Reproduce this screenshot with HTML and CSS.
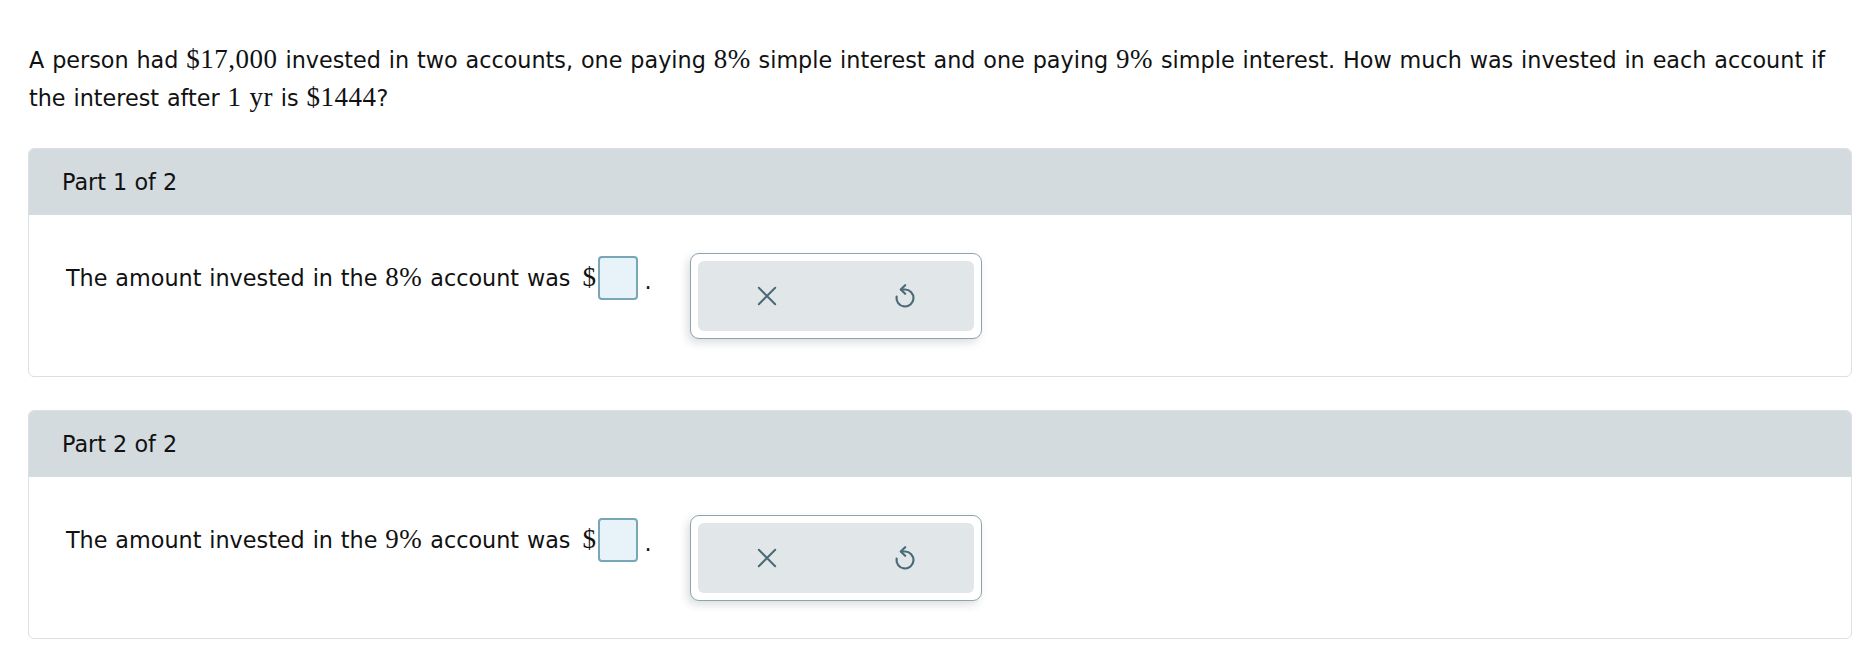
FILE: index.html
```html
<!DOCTYPE html>
<html lang="en">
<head>
<meta charset="utf-8">
<title>Simple interest</title>
<link rel="stylesheet" href="styles.css">
</head>
<body>
<main class="page">
  <p class="question">A person had <span class="m">$17,000</span> invested in two accounts, one paying <span class="m">8%</span> simple interest and one paying <span class="m">9%</span> simple interest. How much was invested in each account if<br>the interest after <span class="m">1</span> <span class="m">yr</span> is <span class="m">$1444</span>?</p>

  <section class="part">
    <div class="part-head">Part 1 of 2</div>
    <div class="part-body">
      <div class="answer-line">
        <span class="txt">The amount invested in the <span class="m">8%</span> account was</span>
        <span class="m dollar">$</span><span class="input"></span><span class="period">.</span>
      </div>
      <div class="tools">
        <div class="tools-inner">
          <button class="tool" type="button" aria-label="Clear">
            <svg viewBox="0 0 20 20" width="20" height="20"><path d="M1.8 1.8 L18.2 18.2 M18.2 1.8 L1.8 18.2" fill="none" stroke="currentColor" stroke-width="2" stroke-linecap="round"/></svg>
          </button>
          <button class="tool" type="button" aria-label="Undo">
            <svg viewBox="0 0 26 28" width="26" height="28"><path d="M4.63 14.52 A8.5 8.5 0 1 0 13 7.5 H9" fill="none" stroke="currentColor" stroke-width="2.2" stroke-linecap="round"/><path d="M13.2 3.2 L8.8 7.5 L13.2 11.8" fill="none" stroke="currentColor" stroke-width="2.2" stroke-linecap="round" stroke-linejoin="round"/></svg>
          </button>
        </div>
      </div>
    </div>
  </section>

  <section class="part">
    <div class="part-head">Part 2 of 2</div>
    <div class="part-body">
      <div class="answer-line">
        <span class="txt">The amount invested in the <span class="m">9%</span> account was</span>
        <span class="m dollar">$</span><span class="input"></span><span class="period">.</span>
      </div>
      <div class="tools">
        <div class="tools-inner">
          <button class="tool" type="button" aria-label="Clear">
            <svg viewBox="0 0 20 20" width="20" height="20"><path d="M1.8 1.8 L18.2 18.2 M18.2 1.8 L1.8 18.2" fill="none" stroke="currentColor" stroke-width="2" stroke-linecap="round"/></svg>
          </button>
          <button class="tool" type="button" aria-label="Undo">
            <svg viewBox="0 0 26 28" width="26" height="28"><path d="M4.63 14.52 A8.5 8.5 0 1 0 13 7.5 H9" fill="none" stroke="currentColor" stroke-width="2.2" stroke-linecap="round"/><path d="M13.2 3.2 L8.8 7.5 L13.2 11.8" fill="none" stroke="currentColor" stroke-width="2.2" stroke-linecap="round" stroke-linejoin="round"/></svg>
          </button>
        </div>
      </div>
    </div>
  </section>
</main>
</body>
</html>
```

FILE: styles.css
```css
* { box-sizing: border-box; }

html, body {
  margin: 0;
  padding: 0;
  background: #ffffff;
}

body {
  font-family: "DejaVu Sans", Verdana, sans-serif;
  font-size: 22.3px;
  word-spacing: 0.8px;
  color: #111111;
}

.page {
  padding: 0 22px 0 28px;
}

.question {
  margin: 41px 0 0 1px;
  line-height: 38px;
}

.m {
  font-family: "Liberation Serif", "Times New Roman", serif;
  font-size: 27px;
  line-height: 1;
  letter-spacing: 0.5px;
  word-spacing: 0;
}

.part {
  margin-top: 31px;
  border: 1px solid #dbe0e3;
  border-radius: 6px;
  overflow: hidden;
}

.part + .part {
  margin-top: 33px;
}

.part-head {
  height: 66px;
  background: #d3dbdf;
  display: flex;
  align-items: center;
  padding-left: 33px;
  word-spacing: 0;
}

.part-body {
  display: flex;
  align-items: flex-start;
  padding: 38px 0 37px 37px;
}

.answer-line {
  display: flex;
  align-items: center;
  height: 43px;
  margin-top: 3px;
}

.txt {
  white-space: pre;
}

.dollar {
  margin-left: 12px;
}

.input {
  width: 40px;
  height: 44px;
  margin-left: 2px;
  border: 2px solid #77a6b6;
  border-radius: 4px;
  background: #e7f3f8;
}

.period {
  margin-left: 6px;
  padding-top: 6px;
}

.tools {
  margin-left: 38px;
  width: 292px;
  height: 86px;
  padding: 7px;
  border: 1px solid #8ea4ad;
  border-radius: 9px;
  background: #ffffff;
  box-shadow: -3px 4px 8px rgba(60, 80, 90, 0.18);
}

.tools-inner {
  display: flex;
  height: 100%;
  background: #e1e6e9;
  border-radius: 6px;
}

.tool {
  flex: 1;
  display: flex;
  align-items: center;
  justify-content: center;
  border: 0;
  padding: 0;
  margin: 0;
  background: transparent;
  color: #4b6a77;
}
```
